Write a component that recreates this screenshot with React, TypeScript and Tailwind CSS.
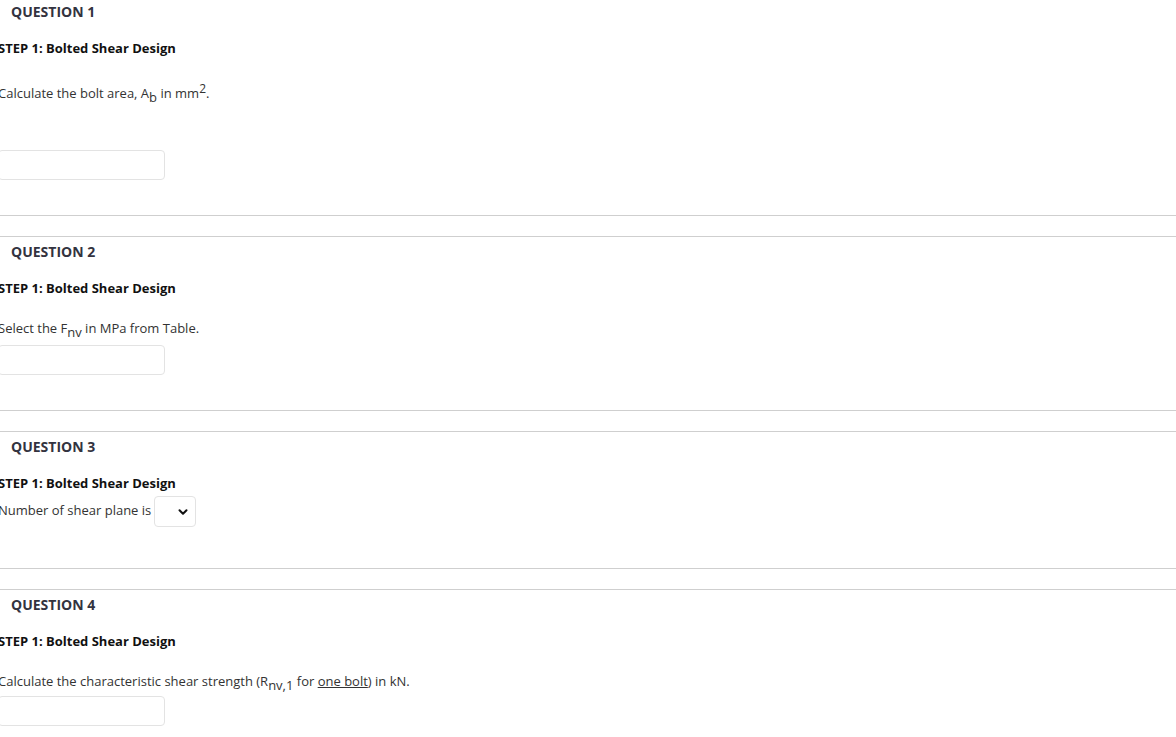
import { ChevronDown } from 'lucide-react'

/* ─── small text helpers ─── */
function Sub({ children }: { children: React.ReactNode }) {
  return <span className="relative top-[4px] text-[13px]">{children}</span>
}

function Sup({ children }: { children: React.ReactNode }) {
  return <span className="relative top-[-5px] text-[12px]">{children}</span>
}

function Title({ n, className = '' }: { n: number; className?: string }) {
  return (
    <div className={`pl-[13px] text-[14px] font-bold leading-[20px] text-[#333340] ${className}`}>
      QUESTION {n}
    </div>
  )
}

function Step({ className = '' }: { className?: string }) {
  return (
    <div className={`text-[13px] font-bold leading-[20px] text-[#111] ${className}`}>
      STEP 1: Bolted Shear Design
    </div>
  )
}

function Answer({ className = '' }: { className?: string }) {
  return <div className={`h-[30px] w-[167px] rounded-[4px] border border-[#e3e3e3] bg-white ${className}`} />
}

function Divider({ className = 'mt-[35px]' }: { className?: string }) {
  return (
    <div className={`ml-[2px] ${className}`}>
      <div className="h-px bg-[#cfcfcf]" />
      <div className="mt-[20px] h-px bg-[#cfcfcf]" />
    </div>
  )
}

export default function App() {
  return (
    <div
      className="min-h-screen overflow-hidden bg-white text-[13px] text-[#333]"
      style={{ fontFamily: '"Open Sans", "Liberation Sans", sans-serif' }}
    >
      <div className="ml-[-2px]">
        {/* Question 1 */}
        <Title n={1} className="pt-[2px]" />
        <Step className="mt-[16px]" />
        <div className="mt-[25px] leading-[20px]">
          Calculate the bolt area, A<Sub>b</Sub> in mm<Sup>2</Sup>.
        </div>
        <Answer className="mt-[46px]" />
        <Divider />

        {/* Question 2 */}
        <Title n={2} className="mt-[5px]" />
        <Step className="mt-[16px]" />
        <div className="mt-[20px] leading-[20px]">
          Select the F<Sub>nv</Sub> in MPa from Table.
        </div>
        <Answer className="mt-[7px]" />
        <Divider />

        {/* Question 3 */}
        <Title n={3} className="mt-[5px]" />
        <Step className="mt-[16px]" />
        <div className="mt-[3px] flex items-start gap-[3px] leading-[20px]">
          <span className="pt-[4px]">Number of shear plane is</span>
          <div className="flex h-[31px] w-[42px] items-center justify-end rounded-[4px] border border-[#e3e3e3] bg-white pr-[5px]">
            <ChevronDown size={14} strokeWidth={3.5} className="text-[#111]" />
          </div>
        </div>
        <Divider className="mt-[41px]" />

        {/* Question 4 */}
        <Title n={4} className="mt-[5px]" />
        <Step className="mt-[16px]" />
        <div className="mt-[20px] leading-[20px]">
          Calculate the characteristic shear strength (R<Sub>nv,1</Sub> for{' '}
          <span className="underline">one bolt</span>) in kN.
        </div>
        <Answer className="mt-[5px]" />
      </div>
    </div>
  )
}
